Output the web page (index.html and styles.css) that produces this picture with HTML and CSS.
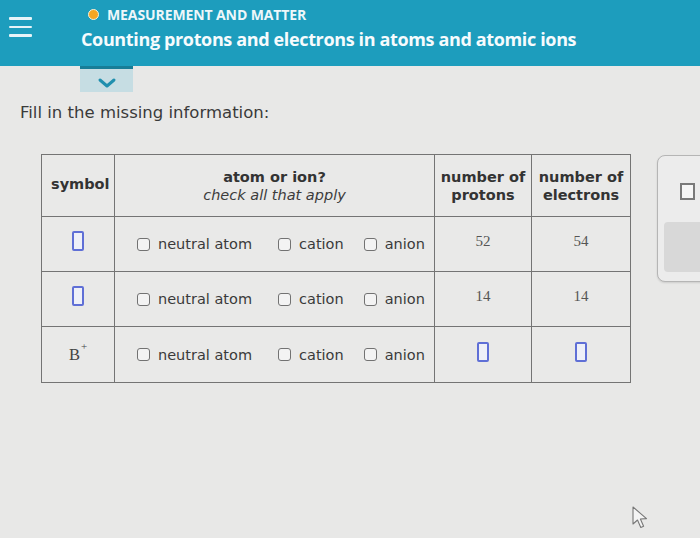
FILE: index.html
```html
<!DOCTYPE html>
<html>
<head>
<meta charset="utf-8">
<link rel="stylesheet" href="styles.css">
</head>
<body>
<header class="topbar">
  <div class="menu">
    <span></span><span></span><span></span>
  </div>
  <div class="titles">
    <div class="topic"><span class="dot"></span>MEASUREMENT AND MATTER</div>
    <div class="title">Counting protons and electrons in atoms and atomic ions</div>
  </div>
</header>
<div class="tabrow">
  <div class="tab">
    <svg width="20" height="12" viewBox="0 0 20 12"><path d="M3 3 L10 9 L17 3" fill="none" stroke="#1f8fae" stroke-width="3" stroke-linecap="round" stroke-linejoin="round"/></svg>
  </div>
</div>
<p class="prompt">Fill in the missing information:</p>
<div class="work">
  <table class="grid">
    <colgroup>
      <col class="c1"><col class="c2"><col class="c3"><col class="c4">
    </colgroup>
    <tr class="head">
      <th class="sym">symbol</th>
      <th><b>atom or ion?</b><br><i>check all that apply</i></th>
      <th>number of<br>protons</th>
      <th>number of<br>electrons</th>
    </tr>
    <tr class="r1">
      <td class="center"><span class="inp"></span></td>
      <td><div class="opts"><span class="opt"><span class="cb"></span>neutral atom</span><span class="opt o2"><span class="cb"></span>cation</span><span class="opt o3"><span class="cb"></span>anion</span></div></td>
      <td class="num">52</td>
      <td class="num">54</td>
    </tr>
    <tr class="r2">
      <td class="center"><span class="inp"></span></td>
      <td><div class="opts"><span class="opt"><span class="cb"></span>neutral atom</span><span class="opt o2"><span class="cb"></span>cation</span><span class="opt o3"><span class="cb"></span>anion</span></div></td>
      <td class="num">14</td>
      <td class="num">14</td>
    </tr>
    <tr class="r3">
      <td class="center"><span class="el">B<sup>+</sup></span></td>
      <td><div class="opts"><span class="opt"><span class="cb"></span>neutral atom</span><span class="opt o2"><span class="cb"></span>cation</span><span class="opt o3"><span class="cb"></span>anion</span></div></td>
      <td class="center"><span class="inp"></span></td>
      <td class="center"><span class="inp"></span></td>
    </tr>
  </table>
  <div class="side">
    <span class="sidebox"></span>
    <div class="sideblock"></div>
  </div>
</div>
<svg class="cursor" width="20" height="26" viewBox="0 0 20 26"><path d="M2 2 L2 19 L6.5 15 L9.8 22.5 L12.6 21.3 L9.4 14 L15.5 13.6 Z" fill="#f4f4f4" stroke="#777" stroke-width="1.1" stroke-linejoin="round"/></svg>
</body>
</html>
```
FILE: styles.css
```css
html, body {
  margin: 0;
  padding: 0;
}
body {
  width: 700px;
  height: 538px;
  overflow: hidden;
  background: #e8e8e7;
  font-family: "DejaVu Sans", Verdana, sans-serif;
  color: #333;
  position: relative;
}
.topbar {
  height: 66px;
  background: #1d9dbd;
  display: flex;
  align-items: flex-start;
  box-sizing: border-box;
}
.menu {
  width: 23px;
  margin: 17px 0 0 9px;
  display: flex;
  flex-direction: column;
  gap: 6px;
}
.menu span {
  display: block;
  height: 2.5px;
  background: #e6f4f8;
  border-radius: 1px;
}
.titles {
  margin-left: 49px;
  padding-top: 5px;
  color: #fff;
  font-family: "Open Sans", "Lato", sans-serif;
}
.topic {
  display: flex;
  align-items: center;
  font-size: 14px;
  font-weight: 700;
  letter-spacing: -0.1px;
  color: #eef7fa;
  margin-left: 3px;
}
.dot {
  width: 9px;
  height: 9px;
  border-radius: 50%;
  background: #f5a623;
  border: 1.5px solid #f7f0dc;
  margin: 0 8px 0 4px;
}
.title {
  margin-top: 3px;
  font-size: 18px;
  font-weight: 700;
  letter-spacing: -0.36px;
  color: #f6fbfd;
}
.tabrow {
  height: 26px;
  padding-left: 80px;
}
.tab {
  width: 53px;
  height: 26px;
  background: #c6dde3;
  border-top: 3px solid #177d97;
  box-sizing: border-box;
  display: flex;
  justify-content: center;
  align-items: center;
  padding-top: 4px;
}
.prompt {
  margin: 10px 0 0 20px;
  font-size: 16.5px;
  color: #3a3a3a;
  line-height: 22px;
}
.work {
  display: flex;
  align-items: flex-start;
  margin-top: 30px;
  padding-left: 41px;
}
.grid {
  border-collapse: collapse;
  flex: none;
  width: 590px;
  background: #e9e9e8;
}
.c1 { width: 73px; }
.c2 { width: 320px; }
.c3 { width: 97px; }
.c4 { width: 99px; }
.grid th, .grid td {
  border: 1.5px solid #747474;
  padding: 0;
}
.grid th {
  font-size: 14.5px;
  font-weight: 700;
  color: #333;
  line-height: 18px;
  text-align: center;
}
.grid th.sym {
  text-align: left;
  padding-left: 9px;
  padding-bottom: 4px;
}
.grid th i {
  font-weight: 400;
  color: #3c3c3c;
}
.head { height: 62px; }
.r1, .r2 { height: 55px; }
.r3 { height: 56px; }
.center { text-align: center; }
.num {
  text-align: center;
  font-family: "Liberation Serif", "Times New Roman", serif;
  font-size: 15px;
  color: #555;
  padding-bottom: 6px !important;
}
.inp {
  display: inline-block;
  width: 8px;
  height: 16px;
  border: 2px solid #5f6fd6;
  border-radius: 2px;
  background: #eef0f8;
  vertical-align: middle;
  margin-bottom: 6px;
}
.el {
  font-family: "Liberation Serif", "Times New Roman", serif;
  font-size: 16.5px;
  color: #444;
  display: inline-block;
  margin: 0 0 4px 0;
}
.el sup {
  font-size: 11px;
  vertical-align: 10px;
  margin-left: 1px;
}
.opts {
  display: flex;
  align-items: center;
  padding-left: 22px;
  font-size: 14.5px;
  color: #3a3a3a;
}
.opt {
  display: flex;
  align-items: center;
}
.o2 { margin-left: 26px; }
.o3 { margin-left: 20px; }
.cb {
  width: 11px;
  height: 11px;
  border: 1.5px solid #727272;
  border-radius: 3px;
  background: #f3f3f3;
  margin-right: 8px;
}
.side {
  flex: none;
  width: 60px;
  height: 127px;
  margin: 1px 0 0 26px;
  border: 1.5px solid #b5b5b5;
  border-radius: 8px;
  background: #ececec;
  box-shadow: 0 1px 2px rgba(0,0,0,0.12);
  box-sizing: border-box;
  padding: 27px 0 0 22px;
}
.sidebox {
  display: block;
  width: 11px;
  height: 13px;
  border: 2px solid #7a7a7a;
  background: #f6f6f6;
}
.sideblock {
  margin: 22px 0 0 -16px;
  height: 50px;
  background: #d8d8d8;
  border-radius: 4px 0 0 4px;
}
.cursor {
  position: absolute;
  left: 631px;
  top: 505px;
}
```
